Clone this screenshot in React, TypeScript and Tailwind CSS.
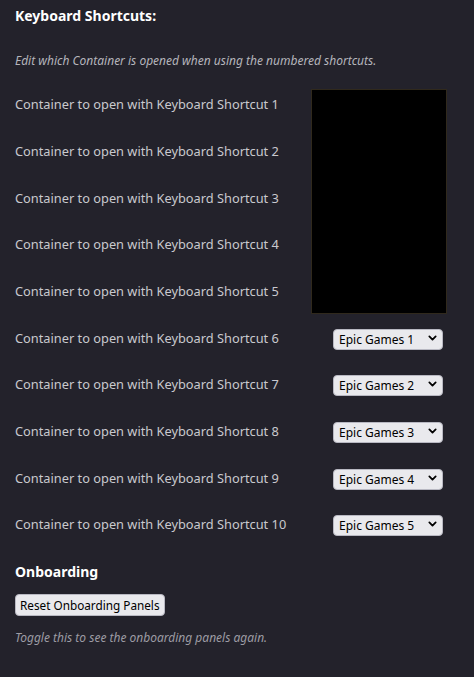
const games = ['Epic Games 1', 'Epic Games 2', 'Epic Games 3', 'Epic Games 4', 'Epic Games 5'];

function ShortcutSelect({ value }: { value: string }) {
  return (
    <div className="relative w-[110px]">
      <select
        defaultValue={value}
        className="h-[21px] w-full appearance-none rounded-[4px] border border-[#b8b8c2] bg-[#e9e9ed] pl-[5px] pr-5 text-[12px] leading-[19px] text-black outline-none"
      >
        {games.map((g) => (
          <option key={g} value={g}>
            {g}
          </option>
        ))}
      </select>
      <svg
        viewBox="0 0 10 10"
        className="pointer-events-none absolute right-[6px] top-1/2 h-[9px] w-[9px] -translate-y-1/2"
      >
        <path d="M1.5 3.2 5 6.7 8.5 3.2" fill="none" stroke="#000" strokeWidth="2" strokeLinecap="round" strokeLinejoin="round" />
      </svg>
    </div>
  );
}

export default function App() {
  const rows = Array.from({ length: 10 }, (_, i) => i + 1);

  return (
    <div
      className="relative min-h-[677px] w-full bg-[#23222b] px-[15px] pt-[6px] text-[#c9c9ce]"
      style={{ fontFamily: '"Noto Sans", "Open Sans", sans-serif' }}
    >
      <h2 className="text-[14px] font-bold leading-[20px] text-white">Keyboard Shortcuts:</h2>

      <p className="mt-[26px] text-[12px] italic leading-[18px] text-[#b5b5bc]">
        Edit which Container is opened when using the numbered shortcuts.
      </p>

      <div className="mt-[11px] pr-[16px]">
        {rows.map((n) => (
          <div key={n} className="flex h-[46.67px] items-center justify-between">
            <span className="text-[12.8px] leading-[20px]">
              Container to open with Keyboard Shortcut {n}
            </span>
            {n > 5 && <ShortcutSelect value={games[n - 6]} />}
          </div>
        ))}
      </div>

      {/* open dropdown popup, drawn black */}
      <div className="absolute left-[311px] top-[89px] h-[225px] w-[136px] border border-[#30291c] bg-black" />

      <h2 className="mt-[14px] text-[14px] font-bold leading-[20px] text-white">Onboarding</h2>

      <button className="mt-[12px] block h-[22px] rounded-[4px] border border-[#b8b8c2] bg-[#e9e9ed] px-[4px] text-[11.75px] leading-[20px] text-black">
        Reset Onboarding Panels
      </button>

      <p className="mt-[13px] text-[12px] italic leading-[18px] text-[#9d9ca4]">
        Toggle this to see the onboarding panels again.
      </p>
    </div>
  );
}
